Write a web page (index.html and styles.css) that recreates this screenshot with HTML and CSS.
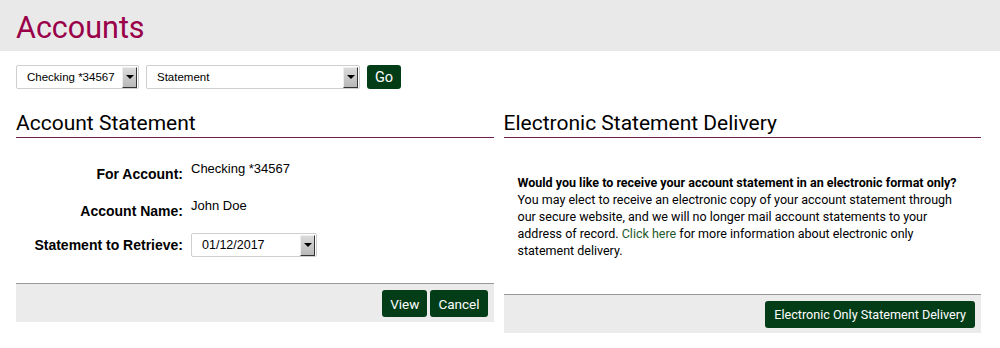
FILE: index.html
```html
<!DOCTYPE html>
<html lang="en">
<head>
    <meta charset="UTF-8">
    <title>Accounts</title>
    <link rel="stylesheet" href="styles.css">
</head>
<body>
    <div class="page-header">
        <h1>Accounts</h1>
    </div>
    <div class="toolbar">
        <div class="select account-select">
            <span class="select-text">Checking *34567</span>
            <span class="select-arrow"></span>
        </div>
        <div class="select type-select">
            <span class="select-text">Statement</span>
            <span class="select-arrow"></span>
        </div>
        <button class="btn">Go</button>
    </div>
    <div class="columns">
        <div class="panel">
            <h2>Account Statement</h2>
            <div class="panel-body form">
                <div class="form-row">
                    <div class="label">For Account:</div>
                    <div class="value">Checking *34567</div>
                </div>
                <div class="form-row">
                    <div class="label">Account Name:</div>
                    <div class="value">John Doe</div>
                </div>
                <div class="form-row center">
                    <div class="label">Statement to Retrieve:</div>
                    <div class="select date-select">
                        <span class="select-text">01/12/2017</span>
                        <span class="select-arrow"></span>
                    </div>
                </div>
            </div>
            <div class="panel-footer">
                <button class="btn">View</button>
                <button class="btn">Cancel</button>
            </div>
        </div>
        <div class="panel">
            <h2>Electronic Statement Delivery</h2>
            <div class="panel-body info">
                <p><strong>Would you like to receive your account statement in an electronic format only?</strong><br>
                You may elect to receive an electronic copy of your account statement through our secure website, and we will no longer mail account statements to your address of record. <a href="#">Click here</a> for more information about electronic only statement delivery.</p>
            </div>
            <div class="panel-footer">
                <button class="btn btn-wide">Electronic Only Statement Delivery</button>
            </div>
        </div>
    </div>
</body>
</html>
```

FILE: styles.css
```css
:root {
    --brand: #990049;
    --rule: #6a1f55;
    --green: #033d18;
    --bar: #ebebeb;
}

body {
    margin: 0;
    font-family: Roboto, Arial, sans-serif;
    color: #000;
    background: #fff;
}

.page-header {
    background-color: #e9e9e9;
    height: 51px;
    padding: 4px 16px 0;
    box-sizing: border-box;
    display: flex;
    align-items: center;
}

h1 {
    margin: 0;
    font-weight: 400;
    font-size: 30.5px;
    color: var(--brand);
}

.toolbar {
    display: flex;
    align-items: center;
    gap: 7px;
    padding: 14px 16px 0;
}

.select {
    display: flex;
    align-items: center;
    height: 22px;
    border: 1px solid #cfcfcf;
    border-radius: 2px;
    background: #fff;
    font-family: "Liberation Sans", Arial, sans-serif;
    font-size: 11.5px;
    padding: 0 1px 0 10px;
    box-sizing: content-box;
}

.select-text {
    flex: 1;
}

.select-arrow {
    width: 13px;
    height: 19px;
    background: linear-gradient(#dadada, #b8b8b8);
    border: 1px solid #eee;
    border-right-color: #333;
    border-bottom-color: #333;
    display: flex;
    align-items: center;
    justify-content: center;
}

.select-arrow::after {
    content: "";
    border-left: 4px solid transparent;
    border-right: 4px solid transparent;
    border-top: 4px solid #000;
}

.account-select {
    width: 110px;
}

.type-select {
    width: 201px;
}

.date-select {
    width: 113px;
    font-size: 12.5px;
}

.btn {
    background-color: var(--green);
    color: #fff;
    border: none;
    border-radius: 3px;
    font-family: Roboto, Arial, sans-serif;
    font-size: 13px;
    height: 24px;
    padding: 0 8px;
    cursor: pointer;
}

.toolbar .btn {
    font-size: 14.5px;
    width: 34px;
    padding: 0;
}

.columns {
    display: flex;
    align-items: flex-start;
    gap: 10px;
    padding: 22px 19px 0 16px;
}

.panel {
    flex: 1;
    display: flex;
    flex-direction: column;
}

h2 {
    margin: 0;
    font-weight: 400;
    font-size: 21px;
    line-height: 24px;
    padding-bottom: 2px;
    border-bottom: 1px solid var(--rule);
}

.form {
    padding: 23px 0 26px;
}

.form-row {
    display: grid;
    grid-template-columns: 167px auto;
    column-gap: 8px;
    align-items: start;
    margin-bottom: 13px;
}

.form-row.center {
    align-items: center;
    margin: -2px 0 0;
}

.label {
    text-align: right;
    font-family: "Liberation Sans", Arial, sans-serif;
    font-weight: 700;
    font-size: 14px;
    line-height: 15px;
    padding-top: 6px;
}

.form-row.center .label {
    padding-top: 0;
}

.value {
    font-family: "Liberation Sans", Arial, sans-serif;
    font-size: 13px;
    line-height: 15px;
    min-height: 24px;
}

.info {
    padding: 36px 14px 35px;
}

.info p {
    margin: 0;
    font-size: 12.5px;
    line-height: 17px;
}

.info a {
    color: #1d5a2c;
    text-decoration: none;
}

.panel-footer {
    background-color: var(--bar);
    border-top: 1px solid #999;
    display: flex;
    justify-content: flex-end;
    gap: 3px;
    padding: 6px 6px 5px;
}

.panel-footer .btn {
    height: 27px;
    font-size: 13.5px;
}

.panel-footer .btn-wide {
    font-size: 12.6px;
    padding: 0 9px;
}
```
